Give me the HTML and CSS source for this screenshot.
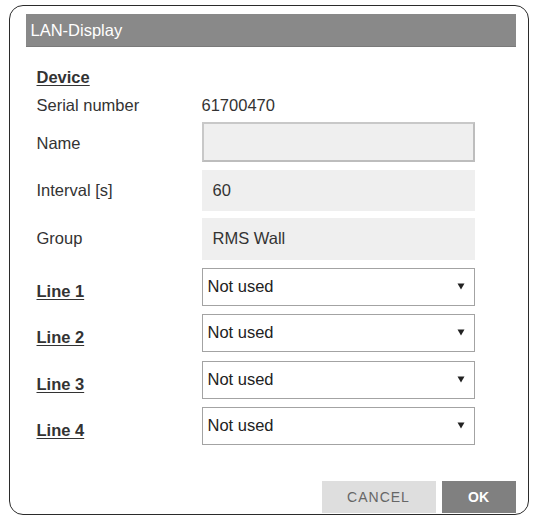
FILE: index.html
```html
<!DOCTYPE html>
<html>
<head>
<meta charset="utf-8">
<link rel="stylesheet" href="styles.css">
</head>
<body>
<div class="dialog">
  <div class="title">LAN-Display</div>
  <div class="content">
    <div class="row row-device"><span class="label heading">Device</span></div>
    <div class="row row-serial"><span class="label">Serial number</span><span class="value">61700470</span></div>
    <div class="row row-name"><span class="label name-label">Name</span><div class="field field-name"></div></div>
    <div class="row row-interval"><span class="label">Interval [s]</span><div class="field">60</div></div>
    <div class="row row-group"><span class="label">Group</span><div class="field">RMS Wall</div></div>
    <div class="row row-line"><span class="label heading line-label">Line 1</span><div class="select"><span>Not used</span><svg class="arrow" width="8" height="7" viewBox="0 0 8 7"><path d="M0.5 0.5 H7.5 L4 6.5 Z" fill="#222"/></svg></div></div>
    <div class="row row-line"><span class="label heading line-label">Line 2</span><div class="select"><span>Not used</span><svg class="arrow" width="8" height="7" viewBox="0 0 8 7"><path d="M0.5 0.5 H7.5 L4 6.5 Z" fill="#222"/></svg></div></div>
    <div class="row row-line"><span class="label heading line-label">Line 3</span><div class="select"><span>Not used</span><svg class="arrow" width="8" height="7" viewBox="0 0 8 7"><path d="M0.5 0.5 H7.5 L4 6.5 Z" fill="#222"/></svg></div></div>
    <div class="row row-line"><span class="label heading line-label">Line 4</span><div class="select"><span>Not used</span><svg class="arrow" width="8" height="7" viewBox="0 0 8 7"><path d="M0.5 0.5 H7.5 L4 6.5 Z" fill="#222"/></svg></div></div>
  </div>
  <div class="actions">
    <div class="btn btn-cancel">CANCEL</div>
    <div class="btn btn-ok">OK</div>
  </div>
</div>
</body>
</html>
```
FILE: styles.css
```css
* { box-sizing: border-box; }
html, body { margin: 0; padding: 0; background: #fff; }
body {
  font-family: "Liberation Sans", Arial, sans-serif;
  font-size: 16.5px;
  color: #333;
}
.dialog {
  margin: 5px 0 0 9px;
  width: 520px;
  height: 510px;
  border: 1.5px solid #2b2b2b;
  border-radius: 14px;
  padding: 7.5px 12.5px 0 15.5px;
  display: flex;
  flex-direction: column;
}
.title {
  height: 33px;
  background: #898989;
  color: #fff;
  font-size: 16.5px;
  line-height: 33px;
  padding-left: 5px;
  border-bottom: 1px solid #7a7a7a;
}
.content {
  padding-left: 11px;
  padding-top: 21px;
  display: flex;
  flex-direction: column;
}
.row {
  display: flex;
  align-items: center;
}
.label {
  width: 165px;
  flex: none;
}
.heading {
  font-weight: bold;
  text-decoration: underline;
  text-underline-offset: 2px;
}
.row-device { height: 20px; }
.row-serial { height: 20px; margin-top: 8px; }
.row-name { height: 40px; margin-top: 6px; }
.name-label { padding-top: 3px; }
.row-interval { height: 41px; margin-top: 8px; }
.row-group { height: 42px; margin-top: 7px; }
.row-line { height: 38px; margin-top: 8.4px; }
.line-label { padding-top: 9px; }
.value { color: #333; }
.field {
  width: 273px;
  height: 100%;
  background: #efefef;
  padding-left: 11px;
  display: flex;
  align-items: center;
  color: #333;
}
.field-name {
  border: 2px solid #bdbdbd;
  border-top-color: #c8c8c8;
  border-left-color: #c8c8c8;
}
.select {
  width: 273px;
  height: 100%;
  border: 1px solid #a3a3a3;
  background: #fff;
  display: flex;
  align-items: center;
  justify-content: space-between;
  padding: 0 9px 1px 5px;
  color: #222;
}
.arrow { margin-top: 0; }
.actions {
  margin-top: auto;
  display: flex;
  justify-content: flex-end;
  gap: 6px;
  padding-bottom: 1.5px;
}
.btn {
  height: 32px;
  display: flex;
  align-items: center;
  justify-content: center;
  font-size: 14px;
}
.btn-cancel {
  width: 114px;
  background: #dedede;
  color: #666;
  letter-spacing: 1px;
}
.btn-ok {
  width: 74px;
  background: #808080;
  color: #fff;
  font-weight: bold;
}
```
